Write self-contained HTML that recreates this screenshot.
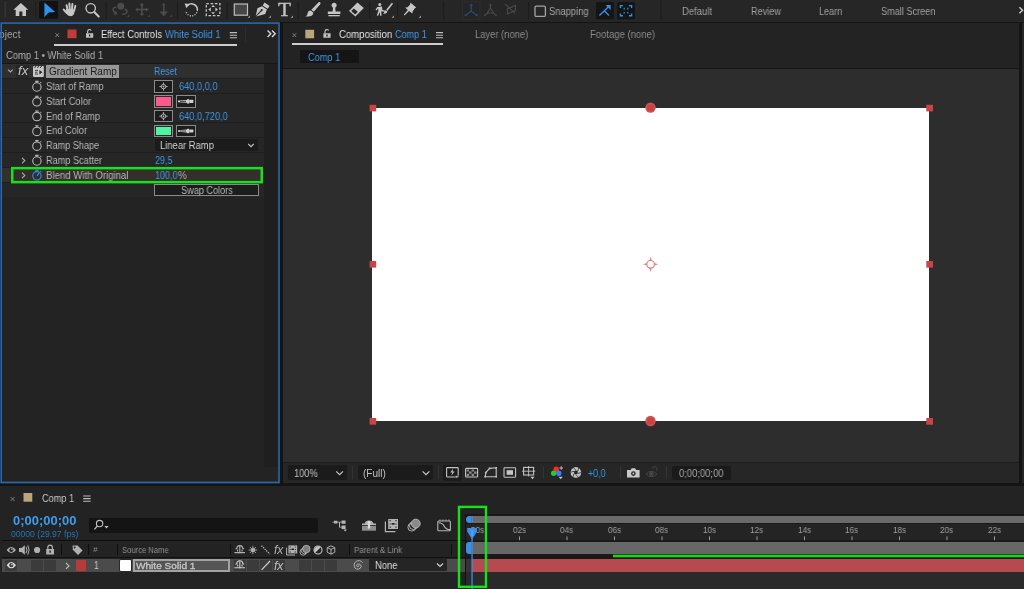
<!DOCTYPE html>
<html lang="en">
<head>
<meta charset="utf-8">
<title>After Effects - Gradient Ramp</title>
<style>
html,body{margin:0;padding:0;}
body{width:1024px;height:589px;overflow:hidden;background:#141414;position:relative;font-family:"Liberation Sans",sans-serif;}
.a{position:absolute;}
.t{will-change:transform;position:absolute;white-space:nowrap;line-height:1;transform-origin:0 50%;display:inline-block;}
#toolbar{left:0;top:0;width:1024px;height:21.5px;background:#262626;}
#lp{left:0;top:22px;width:280px;height:461.5px;background:#232323;overflow:hidden;}
#lpin{left:0;top:-22px;width:280px;height:589px;}
#cp{left:283px;top:23px;width:736px;height:460px;background:#232323;}
#viewer{left:283px;top:69px;width:736px;height:394px;background:#2d2d2d;}
#vfoot{left:283px;top:463px;width:736px;height:20px;background:#262626;}
#rp{left:1022px;top:23px;width:2px;height:460px;background:#262626;}
#tl{left:0;top:486px;width:1024px;height:103px;background:#232323;}
.sep{position:absolute;width:1px;background:#161616;}
.row{position:absolute;left:2px;width:261.5px;background:#262626;}
.dd{position:absolute;background:#1b1b1b;border-radius:2px;}
.btn{position:absolute;box-sizing:border-box;border:1px solid #8a8a8a;background:#1d1d1d;}
.sw{position:absolute;background:#3b3b3b;}
svg{position:absolute;left:0;top:0;overflow:visible;}
</style>
</head>
<body>
<!-- ===== top toolbar ===== -->
<div id="toolbar" class="a"></div>

<!-- ===== left panel : effect controls ===== -->
<div id="lp" class="a"><div id="lpin" class="a">
  <!-- rows -->
  <div class="a" style="left:2px;top:63px;width:276px;height:1px;background:#171717"></div>
  <div class="a" style="left:2px;top:64px;width:261.5px;height:133.4px;background:#1e1e1e"></div>
  <div class="row" style="top:64px;height:14px;background:#2f2f2f"></div>
  <div class="row" style="top:78.8px;height:14px"></div>
  <div class="row" style="top:93.6px;height:14px"></div>
  <div class="row" style="top:108.4px;height:14px"></div>
  <div class="row" style="top:123.2px;height:14px"></div>
  <div class="row" style="top:138px;height:14px"></div>
  <div class="row" style="top:152.8px;height:14px"></div>
  <div class="row" style="top:167.6px;height:14.4px;background:#342f2a"></div>
  <div class="row" style="top:182.6px;height:14px"></div>
  <div class="a" style="left:264px;top:64px;width:14px;height:403px;background:#1f1f1f"></div>
  <!-- selected effect name bg -->
  <div class="a" style="left:46px;top:64.5px;width:73px;height:13.5px;background:#969696"></div>
  <!-- fx toggle box -->
  <div class="a" style="left:16px;top:65px;width:13px;height:13px;background:#272727"></div>
  <!-- value widgets -->
  <div class="btn" style="left:154px;top:80.4px;width:19px;height:12.4px"></div>
  <div class="btn" style="left:154px;top:95.2px;width:19px;height:12.4px;background:#fb5a8b;box-shadow:inset 0 0 0 1px #2a2a2a"></div>
  <div class="btn" style="left:176.4px;top:95.2px;width:19.4px;height:12.4px"></div>
  <div class="btn" style="left:154px;top:110px;width:19px;height:12.4px"></div>
  <div class="btn" style="left:154px;top:124.8px;width:19px;height:12.4px;background:#4ef3a4;box-shadow:inset 0 0 0 1px #2a2a2a"></div>
  <div class="btn" style="left:176.4px;top:124.8px;width:19.4px;height:12.4px"></div>
  <div class="dd" style="left:154.9px;top:139.4px;width:103.4px;height:12px;border-radius:1px"></div>
  <div class="btn" style="left:154px;top:183.9px;width:105px;height:12.5px"></div>
  <!-- tab underline -->
  <div class="a" style="left:54.4px;top:43.6px;width:182.6px;height:2px;background:#cdcdcd"></div>
  <div class="a" style="left:245px;top:26px;width:1px;height:16px;background:#2c2c2c"></div>
<span class="t" style="left:-11.5px;top:29.55px;font-size:10px;color:#a0a0a0;transform:scaleX(1.0120)">Project</span>
<span class="t" style="left:101.0px;top:29.55px;font-size:10px;color:#e4e4e4;transform:scaleX(0.9311)">Effect Controls</span>
<span class="t" style="left:165.0px;top:29.55px;font-size:10px;color:#3f97e6;transform:scaleX(0.9436)">White Solid 1</span>
<span class="t" style="left:5.6px;top:50.55px;font-size:10px;color:#b0b0b0;transform:scaleX(0.9427)">Comp 1 • White Solid 1</span>
</div></div>


<!-- ===== composition panel ===== -->
<div id="cp" class="a"></div>
<div class="a" style="left:292px;top:43.4px;width:151px;height:2px;background:#cdcdcd"></div>
<div class="a" style="left:300.3px;top:50px;width:58.7px;height:13px;background:#151515;border-radius:1px"></div>
<div class="a" style="left:283px;top:68px;width:736px;height:1px;background:#141414"></div>
<div id="viewer" class="a">
  <div class="a" style="left:89px;top:38.6px;width:557.4px;height:313.4px;background:#ffffff"></div>
</div>
<div class="a" style="left:283px;top:462px;width:736px;height:1px;background:#1d1d1d"></div>
<div id="vfoot" class="a"></div>
<div class="dd" style="left:287.7px;top:465.3px;width:59.5px;height:14.6px"></div>
<div class="dd" style="left:357.5px;top:465.3px;width:75.5px;height:14.6px"></div>
<div class="dd" style="left:443px;top:464.5px;width:19px;height:16px;background:#1c1c1c"></div>
<div class="dd" style="left:671.9px;top:465.5px;width:59.1px;height:14.4px;background:#1a1a1a"></div>
<div class="sep" style="left:352px;top:466px;height:13px;background:#333"></div>
<div class="sep" style="left:438px;top:466px;height:13px;background:#333"></div>
<div class="sep" style="left:542.5px;top:466px;height:13px;background:#333"></div>
<div class="sep" style="left:619.5px;top:466px;height:13px;background:#333"></div>
<div class="sep" style="left:666px;top:466px;height:13px;background:#333"></div>
<div id="rp" class="a"></div>

<!-- ===== timeline panel ===== -->
<div id="tl" class="a"></div>
<div class="dd" style="left:89px;top:517.6px;width:229px;height:15px;background:#141414"></div>
<div class="a" style="left:2px;top:540.4px;width:464px;height:1px;background:#0f0f0f"></div>
<div class="a" style="left:2px;top:557px;width:464px;height:1.4px;background:#111"></div>
<div class="a" style="left:2px;top:558.6px;width:463px;height:13.6px;background:#4b4b4b"></div>
<!-- layer row switches -->
<div class="sw" style="left:5px;top:559.7px;width:12px;height:11px"></div>
<div class="sw" style="left:31px;top:559.7px;width:12px;height:11px"></div>
<div class="sw" style="left:44.4px;top:559.7px;width:11.4px;height:11px"></div>
<div class="a" style="left:75.6px;top:560px;width:10.4px;height:10.6px;background:#b93a3a"></div>
<div class="a" style="left:119.6px;top:559.6px;width:11.2px;height:11.4px;background:#fff;border-radius:1px;box-shadow:0 0 0 1px #2a2a2a"></div>
<div class="a" style="left:133px;top:558.5px;width:92.7px;height:9.5px;background:#555;border:2px solid #a2a2a2"></div>
<div class="sw" style="left:233.7px;top:559.7px;width:12px;height:11px"></div>
<div class="sw" style="left:247px;top:559.7px;width:11.6px;height:11px"></div>
<div class="sw" style="left:260px;top:559.7px;width:11.6px;height:11px"></div>
<div class="sw" style="left:273px;top:559.7px;width:11.7px;height:11px"></div>
<div class="sw" style="left:299px;top:559.7px;width:11.6px;height:11px"></div>
<div class="sw" style="left:312px;top:559.7px;width:11.7px;height:11px"></div>
<div class="sw" style="left:325px;top:559.7px;width:12px;height:11px"></div>
<div class="dd" style="left:369.4px;top:559.4px;width:77.8px;height:11.6px;background:#252525;border-radius:1px"></div>
<!-- column separators -->
<div class="sep" style="left:61px;top:544px;height:11px;background:#0e0e0e"></div>
<div class="sep" style="left:88px;top:544px;height:11px;background:#0e0e0e"></div>
<div class="sep" style="left:117px;top:544px;height:11px;background:#0e0e0e"></div>
<div class="sep" style="left:230px;top:544px;height:11px;background:#0e0e0e"></div>
<div class="sep" style="left:349px;top:544px;height:11px;background:#0e0e0e"></div>
<div class="sep" style="left:450.5px;top:544px;height:11px;background:#0e0e0e"></div>
<!-- time area -->
<div id="ruler" class="a" style="left:466px;top:514.4px;width:558px;height:74.6px;overflow:hidden;background:#2a2a2a">
 <div class="a" style="left:-466px;top:-514.4px;width:1024px;height:589px">
  <div class="a" style="left:466px;top:514.4px;width:558px;height:44.2px;background:#191919"></div>
  <div class="a" style="left:471px;top:516px;width:553px;height:7px;background:#6a6a6a"></div>
  <div class="a" style="left:465.7px;top:516px;width:5.3px;height:7px;background:#3a8fe6;border-radius:3.5px 0 0 3.5px"></div>
  <div class="a" style="left:466px;top:523.8px;width:558px;height:16.6px;background:#242424"></div>
  <div class="a" style="left:471px;top:541.6px;width:553px;height:12px;background:#676767"></div>
  <div class="a" style="left:465.7px;top:541.6px;width:5.3px;height:12px;background:#3a8fe6;border-radius:3px 0 0 3px"></div>
  <div class="a" style="left:613px;top:554.4px;width:411px;height:3.6px;background:#0d5c10"></div>
  <div class="a" style="left:613px;top:555.2px;width:411px;height:2px;background:#1fd023"></div>
  <div class="a" style="left:466px;top:558.6px;width:6px;height:13.6px;background:#333"></div>
  <div class="a" style="left:472px;top:558.6px;width:552px;height:13.6px;background:#b54b50"></div>
<span class="t" style="left:470.6px;top:525.74px;font-size:8.6px;color:#a0a0a0;transform:scaleX(0.9524)">00s</span>
<span class="t" style="left:512.9px;top:525.74px;font-size:8.6px;color:#a0a0a0;transform:scaleX(0.9524)">02s</span>
<span class="t" style="left:560.4px;top:525.74px;font-size:8.6px;color:#a0a0a0;transform:scaleX(0.9524)">04s</span>
<span class="t" style="left:607.9px;top:525.74px;font-size:8.6px;color:#a0a0a0;transform:scaleX(0.9524)">06s</span>
<span class="t" style="left:655.4px;top:525.74px;font-size:8.6px;color:#a0a0a0;transform:scaleX(0.9524)">08s</span>
<span class="t" style="left:702.9px;top:525.74px;font-size:8.6px;color:#a0a0a0;transform:scaleX(0.9524)">10s</span>
<span class="t" style="left:750.4px;top:525.74px;font-size:8.6px;color:#a0a0a0;transform:scaleX(0.9524)">12s</span>
<span class="t" style="left:797.9px;top:525.74px;font-size:8.6px;color:#a0a0a0;transform:scaleX(0.9524)">14s</span>
<span class="t" style="left:845.4px;top:525.74px;font-size:8.6px;color:#a0a0a0;transform:scaleX(0.9524)">16s</span>
<span class="t" style="left:892.9px;top:525.74px;font-size:8.6px;color:#a0a0a0;transform:scaleX(0.9524)">18s</span>
<span class="t" style="left:940.4px;top:525.74px;font-size:8.6px;color:#a0a0a0;transform:scaleX(0.9524)">20s</span>
<span class="t" style="left:987.9px;top:525.74px;font-size:8.6px;color:#a0a0a0;transform:scaleX(0.9524)">22s</span>
 </div>
</div>
<div class="a" style="left:465px;top:514.4px;width:1px;height:74.6px;background:#111"></div>

<!-- ===== icons (vector) ===== -->
<svg width="1024" height="589" viewBox="0 0 1024 589">
<!-- focus frame -->
<rect x="1.25" y="23.1" width="277.75" height="459.3" fill="none" stroke="#2a6ab2" stroke-width="1.5"/>
<!-- ============ toolbar ============ -->
<g id="tb" fill="#c6c6c6" stroke="none">
 <!-- grip -->
 <path d="M5.3 2 V18" stroke="#3c3c3c" stroke-width="1.8" stroke-dasharray="1 0.8" fill="none"/>
 <!-- separators -->
 <g fill="#1c1c1c">
  <rect x="35.2" y="2" width="1" height="17"/><rect x="105.6" y="2" width="1" height="17"/>
  <rect x="177" y="2" width="1" height="17"/><rect x="226.6" y="2" width="1" height="17"/>
  <rect x="297.6" y="2" width="1" height="17"/><rect x="369.2" y="2" width="1" height="17"/>
  <rect x="397" y="2" width="1" height="17"/><rect x="443.2" y="1" width="1" height="19"/>
  <rect x="528.2" y="2" width="1" height="17"/><rect x="660.6" y="0" width="1" height="21"/>
 </g>
 <!-- home -->
 <path d="M20.85 2.9 L28.3 9.7 L26 9.7 L26 16.1 L22.4 16.1 L22.4 11.6 L19.3 11.6 L19.3 16.1 L15.7 16.1 L15.7 9.7 L13.4 9.7 Z"/>
 <!-- selection tool (active) -->
 <rect x="39" y="1" width="19" height="17.8" rx="1.5" fill="#111"/>
 <path d="M44.4 2.6 L55.2 12 L48.6 12.4 L44.4 17.2 Z" fill="#2f8fec"/>
 <!-- hand -->
 <g fill="none" stroke="#c6c6c6" stroke-linecap="round">
  <path d="M66.6 5.2 L67.6 10" stroke-width="2"/>
  <path d="M69.4 3.6 L69.8 9.6" stroke-width="2"/>
  <path d="M72.4 4 L72 9.6" stroke-width="2"/>
  <path d="M75.4 5.8 L74.2 10.4" stroke-width="1.9"/>
  <path d="M63.8 9.6 L66.6 12.8" stroke-width="2.1"/>
 </g>
 <path d="M66 9 L75 9.4 L74.2 13.2 Q73.2 16.2 70.6 16.2 Q67.6 16.2 66.2 13.6 Z"/>
 <!-- zoom -->
 <circle cx="90.7" cy="8.3" r="4.7" fill="none" stroke="#c6c6c6" stroke-width="1.4"/>
 <path d="M94.3 12 L98.7 16.4" stroke="#c6c6c6" stroke-width="2.1" stroke-linecap="round"/>
 <!-- orbit (dim) -->
 <g fill="#4c4c4c" stroke="#4c4c4c">
  <circle cx="120.8" cy="6.2" r="3.4" stroke="none"/>
  <path d="M116.5 7 Q111.5 8 113.5 11.2 L116 13.2 M124.6 9 Q128.5 10.6 126.4 13 Q124.8 14.4 122 14.2" fill="none" stroke-width="1.5"/>
  <path d="M113.4 14.4 L117.8 14.6 L115.8 10.8 Z" stroke="none"/>
  <!-- pan -->
  <path d="M141.9 2.8 L144.2 5.6 L142.7 5.6 L142.7 8.7 L145.8 8.7 L145.8 7.2 L148.7 9.5 L145.8 11.8 L145.8 10.3 L142.7 10.3 L142.7 13.4 L144.2 13.4 L141.9 16.2 L139.6 13.4 L141.1 13.4 L141.1 10.3 L138 10.3 L138 11.8 L135.1 9.5 L138 7.2 L138 8.7 L141.1 8.7 L141.1 5.6 L139.6 5.6 Z" stroke="none"/>
  <!-- dolly -->
  <path d="M163.8 3 L165.8 5.2 L164.5 5.2 L164.5 11.6 L168 11.6 L163.8 16.2 L159.6 11.6 L163.1 11.6 L163.1 5.2 L161.8 5.2 Z" stroke="none"/>
  <path d="M127.2 16.8 L129.2 16.8 L129.2 14.8 Z M148 16.8 L150 16.8 L150 14.8 Z M170 16.8 L172 16.8 L172 14.8 Z" stroke="none" fill="#555"/>
 </g>
 <!-- rotate -->
 <path d="M187.6 5.4 A5.9 5.9 0 0 1 197.4 10" fill="none" stroke="#c6c6c6" stroke-width="1.5"/>
 <path d="M197.4 10 A5.9 5.9 0 0 1 185.7 11" fill="none" stroke="#c6c6c6" stroke-width="1.2" stroke-dasharray="1.1 1.3"/>
 <path d="M184.6 3.6 L189.6 4 L186.4 8.2 Z"/>
 <!-- pan behind -->
 <g fill="none" stroke="#c6c6c6" stroke-width="1.3" stroke-dasharray="2.6 1.7">
  <rect x="206.3" y="3.6" width="13.6" height="12" />
 </g>
 <path d="M208.3 9.6 L210.8 7.6 L210.8 11.6 Z M217.9 9.6 L215.4 7.6 L215.4 11.6 Z M213.1 5 L215 7 L211.2 7 Z M213.1 14.2 L215 12.2 L211.2 12.2 Z"/>
 <!-- rectangle tool -->
 <rect x="234.3" y="4" width="13.2" height="11.2" fill="#464646" stroke="#bdbdbd" stroke-width="1.2"/>
 <path d="M247.6 17.8 L250 17.8 L250 15.4 Z M268.6 17.8 L271 17.8 L271 15.4 Z M290.6 17.8 L293 17.8 L293 15.4 Z M391.6 17.8 L394 17.8 L394 15.4 Z M418.6 17.8 L421 17.8 L421 15.4 Z" fill="#9a9a9a"/>
 <!-- pen -->
 <path d="M264.6 2.6 L269.6 6 L267.6 8.8 L262.6 5.4 Z"/>
 <path d="M262 6.2 L266.9 9.6 L265.2 14 L256.2 16.6 L261.6 11.2 A1.1 1.1 0 1 0 260.6 10.4 L255.8 15.8 L257.4 8.2 Z"/>
 <!-- brush -->
 <path d="M318.6 2.2 Q319.8 1.8 320.4 2.6 Q320.8 3.4 320.2 4.2 L313.8 11.8 L311.4 9.8 Z"/>
 <path d="M310.8 10.4 L313.2 12.4 Q313.4 15.6 310 16.2 Q307.6 16.8 305.4 16.4 Q307.6 15.2 307.6 13.4 Q307.8 10.6 310.8 10.4 Z"/>
 <!-- stamp -->
 <circle cx="334.1" cy="5.2" r="2.5"/>
 <path d="M333.1 7 L335.1 7 L335.6 11.4 L340.4 11.4 L340.4 14 L327.8 14 L327.8 11.4 L332.6 11.4 Z"/>
 <rect x="328.4" y="15" width="11.4" height="1.3"/>
 <!-- eraser -->
 <path d="M357.4 2.6 L363.8 8 L355.4 16.4 L349 11 Z"/>
 <path d="M351.2 11 L355.2 14.4 L357.8 11.8 L353.8 8.4 Z" fill="#262626"/>
 <!-- roto brush -->
 <circle cx="379.8" cy="4.4" r="1.5"/>
 <path d="M377.2 7 L382 6.6 L382.4 10 L384.6 10.6 L384.2 11.8 L381.2 11.2 L381.6 15.8 L380.2 15.8 L379.6 12 L378.2 15.8 L376.8 15.4 L378.4 10.8 L378.2 8.4 L376.4 10.6 L375.6 9.8 Z"/>
 <path d="M391.8 2.8 L393 3.8 L387.6 10.8 L386.2 9.8 Z"/>
 <path d="M385.8 10.2 L387.4 11.4 Q387 13.8 383 13.8 Q384.4 12.6 384.2 11.4 Q384.6 10 385.8 10.2 Z"/>
 <!-- pin -->
 <path d="M410.4 2.6 L416.2 7.6 L414.6 8.4 L412.6 11.4 L412.4 13.6 L409 11 L404.6 15.4 L403.8 14.8 L407.8 10 L405.2 7.4 L407.6 7.2 L410.2 4.6 Z"/>
 <!-- axis modes (dim) -->
 <rect x="462.5" y="1.8" width="17.5" height="17.6" fill="#252525" stroke="#303030" stroke-width="0.8"/>
 <g fill="none" stroke="#274a72" stroke-width="1.3">
  <path d="M471.2 4.4 L471.2 11 L465.4 15.4 M471.2 11 L477 15.4"/>
 </g>
 <path d="M471.2 3.4 L473 6 L469.4 6 Z M464.4 16.2 L465 13.4 L467.4 15.8 Z M478 16.2 L477.4 13.4 L475 15.8 Z" fill="#274a72"/>
 <g fill="none" stroke="#4a4a4a" stroke-width="1.1">
  <path d="M490.4 5.4 L490.4 8 M487.6 13 L484.6 15.4 M493.2 13 L496.2 15.4"/>
  <path d="M490.4 8 L493.6 13 L487.2 13 Z"/>
  <path d="M505 4 L515 13.4 M507.4 8.8 L515.4 5.4 L515.4 10.6 L507.4 14 Z"/>
 </g>
 <path d="M490.4 3.6 L491.8 5.8 L489 5.8 Z M484 16 L484.4 13.8 L486.2 15.6 Z M496.8 16 L496.4 13.8 L494.6 15.6 Z" fill="#4a4a4a"/>
 <!-- snapping checkbox -->
 <rect x="535" y="6.2" width="10.4" height="10.2" rx="1.2" fill="none" stroke="#a4a4a4" stroke-width="1.3"/>
 <!-- snap option buttons -->
 <rect x="596" y="2" width="17.8" height="17.4" rx="1.5" fill="#151515"/>
 <rect x="617" y="2" width="18" height="17.4" rx="1.5" fill="#151515"/>
 <g fill="none" stroke="#2f8fec" stroke-width="1.4">
  <path d="M599.4 15.6 L604.4 10.8 L609 15.6 M604.4 10.8 L608.4 6.8"/>
  <path d="M620.4 8 L620.4 5.6 L623 5.6 M629 5.6 L631.6 5.6 L631.6 8 M631.6 13.4 L631.6 15.8 L629 15.8 M623 15.8 L620.4 15.8 L620.4 13.4"/>
  <path d="M623.6 8.6 L624.8 8.6 M627.2 8.6 L628.4 8.6 M623.6 12.8 L624.8 12.8 M627.2 12.8 L628.4 12.8" stroke-width="1.6"/>
 </g>
 <path d="M605.6 5 L610.6 5 L610.6 10 Z" fill="#2f8fec"/>
 <!-- overflow chevron -->
 <path d="M1019.4 7.2 L1022.6 10.2 L1019.4 13.2" fill="none" stroke="#d0d0d0" stroke-width="1.4"/>
</g>

<!-- ============ panel tab icons ============ -->
<g id="tabs">
 <!-- effect controls tab -->
 <path d="M55.4 33.2 L59 37 M59 33.2 L55.4 37" stroke="#8a8a8a" stroke-width="0.9" fill="none"/>
 <rect x="67.5" y="29.5" width="9" height="8.7" fill="#c43a3a"/>
 <path d="M86 33.2 H93.2 V37.8 H86 Z M88.9 34.6 h1.4 v1.9 h-1.4 Z" fill="#c0c0c0" fill-rule="evenodd"/>
 <path d="M87.6 33.2 V31.4 A1.9 1.9 0 0 1 91.2 30.6" fill="none" stroke="#c0c0c0" stroke-width="1.1"/>
 <path d="M229.8 32.6 H237 M229.8 35.2 H237 M229.8 37.8 H237" stroke="#bdbdbd" stroke-width="1.1"/>
 <path d="M267.6 30.6 L270.8 33.8 L267.6 37 M272 30.6 L275.2 33.8 L272 37" fill="none" stroke="#d8d8d8" stroke-width="1.4"/>
 <!-- composition tab -->
 <path d="M292.6 33.2 L296.2 37 M296.2 33.2 L292.6 37" stroke="#8a8a8a" stroke-width="0.9" fill="none"/>
 <rect x="305.3" y="29.8" width="8.8" height="8.5" fill="#b9a57e"/>
 <path d="M323.4 33.2 H330.6 V37.8 H323.4 Z M326.3 34.6 h1.4 v1.9 h-1.4 Z" fill="#c0c0c0" fill-rule="evenodd"/>
 <path d="M325 33.2 V31.4 A1.9 1.9 0 0 1 328.6 30.6" fill="none" stroke="#c0c0c0" stroke-width="1.1"/>
 <path d="M436 32.6 H443 M436 35.2 H443 M436 37.8 H443" stroke="#bdbdbd" stroke-width="1.1"/>
 <!-- timeline tab -->
 <path d="M10.6 497 L14.6 501 M14.6 497 L10.6 501" stroke="#8a8a8a" stroke-width="0.9" fill="none"/>
 <rect x="23.5" y="493" width="8.8" height="8.7" fill="#b9a57e"/>
 <path d="M83.2 496 H90.6 M83.2 498.6 H90.6 M83.2 501.2 H90.6" stroke="#bdbdbd" stroke-width="1.1"/>
</g>

<!-- ============ effect controls icons ============ -->
<g id="fxicons" fill="none" stroke="#b8b8b8" stroke-width="1.1">
 <path d="M8 69.6 L10.4 72 L12.8 69.6" stroke="#a8a8a8" stroke-width="1.2"/>
 <rect x="33" y="66" width="10.8" height="11" rx="1.2" fill="#c8c8c8" stroke="none"/>
 <path d="M34.6 68 L36 66 M37.4 68 L38.8 66 M40.2 68 L41.6 66" stroke="#333" stroke-width="1"/>
 <path d="M35 70.4 h3 M35 72.2 h2.4 M35 74 h3" stroke="#333" stroke-width="0.9"/>
 <path d="M39.4 70 L42.4 72.2 L39.4 74.4 Z" fill="#222" stroke="none"/>
 <!-- stopwatches -->
 <g id="sw0"><circle cx="36.9" cy="87" r="4.2"/><path d="M35.2 81.4 H38.6 M36.9 81.4 V82.8 M40.4 83 L41.2 82.2" /></g>
 <g><circle cx="36.9" cy="101.8" r="4.2"/><path d="M35.2 96.2 H38.6 M36.9 96.2 V97.6 M40.4 97.8 L41.2 97"/></g>
 <g><circle cx="36.9" cy="116.6" r="4.2"/><path d="M35.2 111 H38.6 M36.9 111 V112.4 M40.4 112.6 L41.2 111.8"/></g>
 <g><circle cx="36.9" cy="131.4" r="4.2"/><path d="M35.2 125.8 H38.6 M36.9 125.8 V127.2 M40.4 127.4 L41.2 126.6"/></g>
 <g><circle cx="36.9" cy="146.2" r="4.2"/><path d="M35.2 140.6 H38.6 M36.9 140.6 V142 M40.4 142.2 L41.2 141.4"/></g>
 <g><circle cx="36.9" cy="161" r="4.2"/><path d="M35.2 155.4 H38.6 M36.9 155.4 V156.8 M40.4 157 L41.2 156.2"/></g>
 <g stroke="#2f8fec"><circle cx="36.9" cy="175.8" r="4.2"/><path d="M35.2 170.2 H38.6 M36.9 170.2 V171.6 M40.4 171.8 L41.2 171 M36.9 175.8 L39.2 173.2"/></g>
 <path d="M22 157.8 L24.8 160.6 L22 163.4 M22 172.6 L24.8 175.4 L22 178.2" stroke="#a8a8a8" stroke-width="1.2"/>
 <!-- point pickers -->
 <g stroke="#c4c4c4" stroke-width="0.9">
  <circle cx="163.5" cy="86.6" r="2.2"/><path d="M159.4 86.6 H161.3 M165.7 86.6 H167.6 M163.5 82.6 V84.4 M163.5 88.8 V90.6"/><circle cx="163.5" cy="86.6" r="0.5" fill="#c4c4c4"/>
  <circle cx="163.5" cy="116.2" r="2.2"/><path d="M159.4 116.2 H161.3 M165.7 116.2 H167.6 M163.5 112.2 V114 M163.5 118.4 V120.2"/><circle cx="163.5" cy="116.2" r="0.5" fill="#c4c4c4"/>
 </g>
 <!-- eyedroppers -->
 <g fill="#cfcfcf" stroke="none">
  <path d="M178 100.6 L187 100 L187 102.8 L178 102.2 Z"/><rect x="187" y="99.2" width="2.2" height="4.4"/><rect x="189.2" y="99.8" width="4.2" height="3.2" rx="0.8"/>
  <path d="M178 130.2 L187 129.6 L187 132.4 L178 131.8 Z"/><rect x="187" y="128.8" width="2.2" height="4.4"/><rect x="189.2" y="129.4" width="4.2" height="3.2" rx="0.8"/>
 </g>
 <path d="M180 101.4 H186 M180 131 H186" stroke="#1d1d1d" stroke-width="0.8"/>
 <!-- dropdown chevron -->
 <path d="M248.2 143.8 L251 146.6 L253.8 143.8" stroke="#c8c8c8" stroke-width="1.2"/>
</g>

<!-- ============ viewer overlays ============ -->
<g id="viewer-ov">
 <g fill="#c94545">
  <rect x="369.6" y="104.8" width="6.6" height="6.6"/><rect x="926.3" y="104.8" width="6.7" height="6.6"/>
  <rect x="369.6" y="418" width="6.6" height="6.7"/><rect x="926.3" y="418" width="6.7" height="6.7"/>
  <rect x="369.6" y="261" width="6.6" height="6.6"/><rect x="926.3" y="261" width="6.7" height="6.6"/>
  <circle cx="650.5" cy="107.6" r="5.2" fill="#cf5252"/><rect x="647.4" y="104.6" width="6.4" height="6.4" fill="#c84444"/>
  <circle cx="650.5" cy="421" r="5.2" fill="#cf5252"/><rect x="647.4" y="418" width="6.4" height="6.4" fill="#c84444"/>
 </g>
 <g fill="none" stroke="#dd7a82" stroke-width="1.2">
  <circle cx="650.6" cy="264.3" r="3.8"/>
 </g>
 <path d="M650.6 256.6 L651.8 260.6 L649.4 260.6 Z M650.6 272 L651.8 268 L649.4 268 Z M642.9 264.3 L646.9 263.1 L646.9 265.5 Z M658.3 264.3 L654.3 263.1 L654.3 265.5 Z" fill="#e08890"/>
</g>

<!-- ============ viewer footer icons ============ -->
<g id="vf" fill="none" stroke="#c4c4c4" stroke-width="1.1">
 <path d="M336.2 471.4 L339.6 474.6 L343 471.4 M422.6 471.4 L426 474.6 L429.4 471.4" stroke-width="1.3"/>
 <!-- fast preview -->
 <rect x="446.6" y="467.6" width="11.6" height="9.4" rx="0.8"/>
 <path d="M453 468.6 L450.4 472.6 L452.4 472.6 L451.2 476 L454.6 471.6 L452.6 471.6 Z" fill="#c4c4c4" stroke="none"/>
 <path d="M454.4 475.8 L458.8 475.8 L456.6 478.2 Z" fill="#d8d8d8" stroke="#1c1c1c" stroke-width="0.6"/>
 <!-- transparency grid -->
 <rect x="465.6" y="468.4" width="12" height="8.6" rx="0.8"/>
 <path d="M466.6 469.4 h2.5 v2.2 h-2.5 Z M471.6 469.4 h2.5 v2.2 h-2.5 Z M469.1 471.6 h2.5 v2.2 h-2.5 Z M474.1 471.6 h2.5 v2.2 h-2.5 Z M466.6 473.8 h2.5 v2.2 h-2.5 Z M471.6 473.8 h2.5 v2.2 h-2.5 Z" fill="#8c8c8c" stroke="none"/>
 <!-- mask/shape toggle -->
 <path d="M489.6 468.4 L496.2 467.8 L496.2 476.8 L485.2 476.8 L485.8 472.6 Z"/>
 <path d="M488.8 467.6 h1.6 v1.6 h-1.6 Z M495.4 467 h1.6 v1.6 h-1.6 Z M495.4 476 h1.6 v1.6 h-1.6 Z M484.4 476 h1.6 v1.6 h-1.6 Z M485 471.8 h1.6 v1.6 h-1.6 Z" fill="#c4c4c4" stroke="none"/>
 <!-- region of interest -->
 <rect x="504" y="467.8" width="11.6" height="9.4" rx="0.6"/>
 <rect x="506.6" y="470.2" width="6.4" height="4.6" fill="#c4c4c4" stroke="none"/>
 <!-- guides -->
 <rect x="523.6" y="467.4" width="10" height="7.6"/>
 <path d="M528.6 466 V476.4 M522 471.2 H535.2" stroke-width="0.9"/>
 <path d="M530.4 476.8 L534.6 476.8 L532.5 479.2 Z" fill="#c4c4c4" stroke="none"/>
 <!-- channels -->
 <g stroke="none"><circle cx="556.2" cy="469.2" r="2.7" fill="#ff2a1c"/><circle cx="553.7" cy="473.2" r="2.7" fill="#1fcf2c"/><circle cx="558.8" cy="473.2" r="2.7" fill="#3b7dff"/></g>
 <path d="M559.4 468 H563 M561.2 466.2 V469.8" stroke-width="0.9"/>
 <path d="M558.6 476.8 L562.8 476.8 L560.7 479.2 Z" fill="#c4c4c4" stroke="none"/>
 <!-- exposure aperture -->
 <circle cx="575.9" cy="472.4" r="5.3" fill="#c4c4c4" stroke="none"/>
 <path d="M575.9 470.3 L577.7 471.35 V473.45 L575.9 474.5 L574.1 473.45 V471.35 Z" fill="#262626" stroke="none"/>
 <path d="M575.9 470.3 L573.4 467.6 M577.7 471.35 L578.8 467.9 M577.7 473.45 L581.3 472.6 M575.9 474.5 L578.4 477.2 M574.1 473.45 L573 476.9 M574.1 471.35 L570.5 472.2" stroke="#262626" stroke-width="0.8"/>
 <!-- snapshot camera -->
 <path d="M627 470 H630.6 L631.6 468.2 H635.2 L636.2 470 H639.6 V477.6 H627 Z" fill="#c8c8c8" stroke="none"/>
 <circle cx="633.4" cy="473.6" r="2.3" fill="#262626" stroke="none"/><circle cx="633.4" cy="473.6" r="1" fill="#c8c8c8" stroke="none"/>
 <!-- show snapshot (dim) -->
 <g stroke="#474747" stroke-width="1">
  <path d="M646 474 Q651 468.6 657 474 Q651 479.4 646 474 Z"/><circle cx="651.4" cy="474" r="1.8" fill="#474747"/>
  <path d="M652 468.4 A2.6 2.6 0 0 1 657 469.6 V471"/>
 </g>
</g>

<!-- ============ timeline icons ============ -->
<g id="tli" fill="#b4b4b4" stroke="none">
 <!-- search -->
 <circle cx="99.6" cy="523.6" r="3.2" fill="none" stroke="#c0c0c0" stroke-width="1.1"/>
 <path d="M97.4 526 L94.4 529.4" stroke="#c0c0c0" stroke-width="1.2"/>
 <path d="M104.4 526 L108.6 526 L106.5 528.4 Z" fill="#c0c0c0"/>
 <!-- flowchart -->
 <path d="M332.4 521.8 h1.6 v-1 h3.4 v1 h4.2 v-1.4 h4 v3.4 h-4 v-1.2 h-1.6 v4.2 h1.6 v-1.2 h4 v3.4 h-4 v-1.4 h-2.6 v-5 h-1.6 v1 h-3.4 v-1 h-1.6 Z"/>
 <path d="M343.4 529.6 L347 529.6 L345.2 531.4 Z"/>
 <!-- shy -->
 <path d="M362 523.6 H364.6 A4.5 4 0 0 1 373.4 523.6 H376 V525 H362 Z"/>
 <rect x="362" y="525.8" width="14" height="4.9" fill="#8e8e8e"/>
 <rect x="367.8" y="521" width="2.4" height="7.6" fill="#dcdcdc"/>
 <!-- frame blend -->
 <rect x="388.2" y="519" width="9.8" height="10" fill="#b4b4b4"/>
 <path d="M385.4 521.6 V531.6 H395.4" fill="none" stroke="#b4b4b4" stroke-width="1.2"/>
 <path d="M389.6 520 h1.2 v1.2 h-1.2 Z M389.6 523.4 h1.2 v1.2 h-1.2 Z M389.6 526.6 h1.2 v1.2 h-1.2 Z M395.4 520 h1.2 v1.2 h-1.2 Z M395.4 523.4 h1.2 v1.2 h-1.2 Z M395.4 526.6 h1.2 v1.2 h-1.2 Z M391.6 523 h3 v1.8 h-3 Z" fill="#2a2a2a"/>
 <!-- motion blur -->
 <g fill="none" stroke="#b4b4b4" stroke-width="1"><circle cx="411.8" cy="527.2" r="3.9"/><circle cx="413.4" cy="525.6" r="3.9"/></g>
 <circle cx="415.8" cy="523.6" r="4.4" fill="#8a8a8a" stroke="#b4b4b4" stroke-width="1"/>
 <!-- graph editor -->
 <rect x="437.8" y="521" width="12.6" height="9.8" rx="1" fill="none" stroke="#b4b4b4" stroke-width="1.1"/>
 <path d="M438.6 522.8 C446.4 522.8 442 529.6 450 529.6" fill="none" stroke="#b4b4b4" stroke-width="1.1"/>
 <path d="M440 519.4 V521 M443 519.4 V521 M446 519.4 V521 M449 519.4 V521" stroke="#b4b4b4" stroke-width="0.9"/>

 <!-- column header icons -->
 <g fill="#b0b0b0">
  <path d="M6.6 550 Q11.3 543.8 16 550 Q11.3 556.2 6.6 550 Z M11.3 547.9 a2.1 2.1 0 1 0 0.01 0 Z" fill-rule="evenodd"/><circle cx="11.9" cy="549.4" r="0.8"/>
  <path d="M19 548 h2.6 l3.2 -2.8 v9.6 l-3.2 -2.8 h-2.6 Z"/>
  <path d="M26 546.8 Q28 550 26 553.2 M27.8 545.4 Q30.4 550 27.8 554.6" fill="none" stroke="#b0b0b0" stroke-width="1"/>
  <circle cx="37.1" cy="550" r="3.1"/>
  <path d="M46.2 549 H54 V554.4 H46.2 Z M49.4 550.6 h1.4 v2.2 h-1.4 Z" fill-rule="evenodd"/>
  <path d="M47.8 549 V547.4 A2.3 2.3 0 0 1 52.4 547.4 V549" fill="none" stroke="#b0b0b0" stroke-width="1.2"/>
  <path d="M72.6 545.4 L77.6 545.4 L82.6 550.6 L78 555 L72.8 549.8 Z M74.6 546.6 a0.9 0.9 0 1 0 0.01 0 Z" fill-rule="evenodd"/>
 </g>
 <!-- layer row: eye, twirl -->
 <path d="M6.6 565.2 Q11.3 559 16 565.2 Q11.3 571.4 6.6 565.2 Z M11.3 563.1 a2.1 2.1 0 1 0 0.01 0 Z" fill="#dcdcdc" fill-rule="evenodd"/><circle cx="11.9" cy="564.6" r="0.8" fill="#dcdcdc"/>
 <path d="M66 563 L69 565.9 L66 568.8" fill="none" stroke="#b8b8b8" stroke-width="1.2"/>
 <!-- switches header -->
 <g id="shyh">
  <path d="M235.4 548.8 H236.8 A3 3.2 0 0 1 242.8 548.8 H244.2" fill="none" stroke="#b0b0b0" stroke-width="1.1"/>
  <path d="M234.4 552.6 H245 M239.8 546 V553.4 M237.6 549.6 V551.4 M242 549.6 V551.4" fill="none" stroke="#b0b0b0" stroke-width="1.1"/>
 </g>
 <g fill="none" stroke="#b0b0b0" stroke-width="0.9">
  <circle cx="252.9" cy="550" r="1.7" fill="#b0b0b0"/>
  <path d="M252.9 545.8 V554.2 M248.7 550 H257.1 M249.9 547 L255.9 553 M255.9 547 L249.9 553"/>
  <path d="M261.4 545.6 L269.8 554" stroke-width="1.3" stroke-dasharray="1.4 0.9"/>
 </g>
 <rect x="288.4" y="545.4" width="8.8" height="8" fill="#b0b0b0"/>
 <path d="M286.6 547.6 V555 H295" fill="none" stroke="#b0b0b0" stroke-width="1"/>
 <path d="M289.6 546.4 h1 v1 h-1 Z M289.6 549 h1 v1 h-1 Z M289.6 551.4 h1 v1 h-1 Z M294.8 546.4 h1 v1 h-1 Z M294.8 549 h1 v1 h-1 Z M294.8 551.4 h1 v1 h-1 Z M291.4 548.6 h2.6 v1.4 h-2.6 Z" fill="#232323"/>
 <g fill="none" stroke="#b0b0b0" stroke-width="0.9"><circle cx="303.2" cy="552" r="3.2"/><circle cx="304.6" cy="550.6" r="3.2"/></g>
 <circle cx="306.4" cy="549" r="3.7" fill="#808080" stroke="#b0b0b0" stroke-width="0.9"/>
 <circle cx="318" cy="550" r="4" fill="none" stroke="#c4c4c4" stroke-width="1.1"/>
 <path d="M315.2 552.8 A4 4 0 0 1 320.8 547.2 Z" fill="#c4c4c4"/>
 <g fill="none" stroke="#b0b0b0" stroke-width="1"><path d="M331 545.8 L334.8 547.6 V552.2 L331 554.2 L327.2 552.2 V547.6 Z M327.2 547.6 L331 549.4 L334.8 547.6 M331 549.4 V554.2"/></g>
 <!-- layer row switches -->
 <g>
  <path d="M235.4 564 H236.8 A3 3.2 0 0 1 242.8 564 H244.2" fill="none" stroke="#d0d0d0" stroke-width="1.1"/>
  <path d="M234.4 567.8 H245 M239.8 561.2 V568.6 M237.6 564.8 V566.6 M242 564.8 V566.6" fill="none" stroke="#d0d0d0" stroke-width="1.1"/>
 </g>
 <path d="M261.6 569.8 L270 561" fill="none" stroke="#d0d0d0" stroke-width="1.2"/>
 <!-- pick whip -->
 <path d="M359 565.4 A1.2 1.2 0 1 1 357.6 564.2 A2.6 2.6 0 0 1 361.2 566.4 A3.6 3.6 0 0 1 355 568 A4.6 4.6 0 0 1 362.6 562.6" fill="none" stroke="#c0c0c0" stroke-width="0.9"/>
 <path d="M437 563.6 L440 566.4 L443 563.6" fill="none" stroke="#d0d0d0" stroke-width="1.3"/>
</g>

<!-- ============ playhead ============ -->
<g id="ph">
 <rect x="471.8" y="516.4" width="1" height="6.4" fill="#3a8fe6"/>
 <rect x="471.4" y="527" width="1.3" height="62" fill="#3a8ee4"/>
 <path d="M467.2 528 H477 V531.6 L472.1 539.4 L467.2 531.6 Z" fill="#3a8fe6"/>
 <rect x="471.6" y="530" width="1" height="6" fill="#6cb0f0"/>
</g>
<!-- ruler ticks -->
<g id="ticks" stroke="#9a9a9a" stroke-width="1">
 <path d="M519.5 536.4 V540.2 M567 536.4 V540.2 M614.5 536.4 V540.2 M662 536.4 V540.2 M709.5 536.4 V540.2 M757 536.4 V540.2 M804.5 536.4 V540.2 M852 536.4 V540.2 M899.5 536.4 V540.2 M947 536.4 V540.2 M994.5 536.4 V540.2"/>
</g>

</svg>

<span class="t" style="left:549.0px;top:6.55px;font-size:10px;color:#a6a6a6;transform:scaleX(0.9346)">Snapping</span>
<span class="t" style="left:681.9px;top:6.55px;font-size:10px;color:#a0a0a0;transform:scaleX(0.9467)">Default</span>
<span class="t" style="left:750.6px;top:6.55px;font-size:10px;color:#a0a0a0;transform:scaleX(0.9147)">Review</span>
<span class="t" style="left:819.0px;top:6.55px;font-size:10px;color:#a0a0a0;transform:scaleX(0.9070)">Learn</span>
<span class="t" style="left:880.6px;top:6.55px;font-size:10px;color:#a0a0a0;transform:scaleX(0.9148)">Small Screen</span>
<span class="t" style="left:338.7px;top:29.55px;font-size:10px;color:#e4e4e4;transform:scaleX(0.9569)">Composition</span>
<span class="t" style="left:395.2px;top:29.55px;font-size:10px;color:#3f97e6;transform:scaleX(0.9053)">Comp 1</span>
<span class="t" style="left:474.7px;top:29.55px;font-size:10px;color:#8c8c8c;transform:scaleX(0.9400)">Layer (none)</span>
<span class="t" style="left:590.0px;top:29.55px;font-size:10px;color:#8c8c8c;transform:scaleX(0.9504)">Footage (none)</span>
<span class="t" style="left:307.8px;top:52.55px;font-size:10px;color:#3f97e6;transform:scaleX(0.9196)">Comp 1</span>
<span class="t" style="left:48.8px;top:66.55px;font-size:10px;color:#1c1c1c;transform:scaleX(0.9939)">Gradient Ramp</span>
<span class="t" style="left:154.4px;top:66.55px;font-size:10px;color:#3f97e6;transform:scaleX(0.8804)">Reset</span>
<span class="t" style="left:45.7px;top:81.55px;font-size:10px;color:#b6b6b6;transform:scaleX(0.9319)">Start of Ramp</span>
<span class="t" style="left:45.7px;top:96.55px;font-size:10px;color:#b6b6b6;transform:scaleX(0.9436)">Start Color</span>
<span class="t" style="left:45.7px;top:111.55px;font-size:10px;color:#b6b6b6;transform:scaleX(0.9251)">End of Ramp</span>
<span class="t" style="left:45.7px;top:125.55px;font-size:10px;color:#b6b6b6;transform:scaleX(0.9220)">End Color</span>
<span class="t" style="left:45.7px;top:140.56px;font-size:10px;color:#b6b6b6;transform:scaleX(0.9096)">Ramp Shape</span>
<span class="t" style="left:45.7px;top:155.56px;font-size:10px;color:#b6b6b6;transform:scaleX(0.9176)">Ramp Scatter</span>
<span class="t" style="left:45.7px;top:170.56px;font-size:10px;color:#b6b6b6;transform:scaleX(0.9639)">Blend With Original</span>
<span class="t" style="left:178.5px;top:81.55px;font-size:10px;color:#3f97e6;transform:scaleX(0.9228)">640,0,0,0</span>
<span class="t" style="left:178.5px;top:111.55px;font-size:10px;color:#3f97e6;transform:scaleX(0.9238)">640,0,720,0</span>
<span class="t" style="left:160.4px;top:140.56px;font-size:10px;color:#d2d2d2;transform:scaleX(0.9412)">Linear Ramp</span>
<span class="t" style="left:154.9px;top:155.56px;font-size:10px;color:#3f97e6;transform:scaleX(0.8937)">29,5</span>
<span class="t" style="left:154.9px;top:170.56px;font-size:10px;color:#3f97e6;transform:scaleX(0.8989)">100,0</span>
<span class="t" style="left:178.2px;top:170.56px;font-size:10px;color:#a8a8a8;transform:scaleX(0.9656)">%</span>
<span class="t" style="left:180.6px;top:185.56px;font-size:10px;color:#b8b8b8;transform:scaleX(0.9135)">Swap Colors</span>
<span class="t" style="left:18.0px;top:64.02px;font-size:13px;color:#c4c4c4;font-style:italic;transform:scaleX(1.0074)">fx</span>
<span class="t" style="left:293.5px;top:468.56px;font-size:10px;color:#c0c0c0;transform:scaleX(0.9266)">100%</span>
<span class="t" style="left:362.7px;top:468.56px;font-size:10px;color:#c0c0c0;transform:scaleX(1.0052)">(Full)</span>
<span class="t" style="left:587.7px;top:468.56px;font-size:10px;color:#3f97e6;transform:scaleX(0.8861)">+0,0</span>
<span class="t" style="left:679.0px;top:468.56px;font-size:10px;color:#a8a8a8;transform:scaleX(0.9415)">0;00;00;00</span>
<span class="t" style="left:41.9px;top:493.56px;font-size:10px;color:#c8c8c8;transform:scaleX(0.9167)">Comp 1</span>
<span class="t" style="left:12.5px;top:514.86px;font-size:12px;color:#3c9cec;font-weight:bold;transform:scaleX(1.0814)">0;00;00;00</span>
<span class="t" style="left:11.0px;top:529.74px;font-size:8.6px;color:#2272b8;transform:scaleX(0.9944)">00000 (29.97 fps)</span>
<span class="t" style="left:93.0px;top:546.25px;font-size:8px;color:#8a8a8a;font-style:italic;transform:scaleX(0.9432)">#</span>
<span class="t" style="left:121.9px;top:545.74px;font-size:8.6px;color:#929292;transform:scaleX(0.8906)">Source Name</span>
<span class="t" style="left:354.4px;top:545.74px;font-size:8.6px;color:#929292;transform:scaleX(0.9323)">Parent &amp; Link</span>
<span class="t" style="left:94.0px;top:560.55px;font-size:10px;color:#d0d0d0;transform:scaleX(0.8449)">1</span>
<span class="t" style="left:135.6px;top:560.89px;font-size:9.6px;color:#c8c8c8;-webkit-text-stroke:0.3px #c8c8c8;transform:scaleX(1.0507)">White Solid 1</span>
<span class="t" style="left:375.2px;top:560.55px;font-size:10px;color:#dcdcdc;transform:scaleX(0.9412)">None</span>
<span class="t" style="left:274.0px;top:543.86px;font-size:12px;color:#b0b0b0;font-style:italic;transform:scaleX(0.9632)">fx</span>
<span class="t" style="left:274.0px;top:559.86px;font-size:12px;color:#c0c0c0;font-style:italic;transform:scaleX(0.9632)">fx</span>
<span class="t" style="left:278.0px;top:0.78px;font-size:18px;color:#c4c4c4;font-family:'Liberation Serif',serif;-webkit-text-stroke:0.3px #c4c4c4;transform:scaleX(1.1818)">T</span>

<!-- annotation highlight boxes -->
<svg width="1024" height="589" viewBox="0 0 1024 589"><rect x="12.25" y="168.15" width="249.5" height="14" fill="none" stroke="#18e01c" stroke-width="2.5"/><rect x="459" y="506.9" width="27" height="79.9" fill="none" stroke="#18e01c" stroke-width="2.4"/></svg>
</body>
</html>
